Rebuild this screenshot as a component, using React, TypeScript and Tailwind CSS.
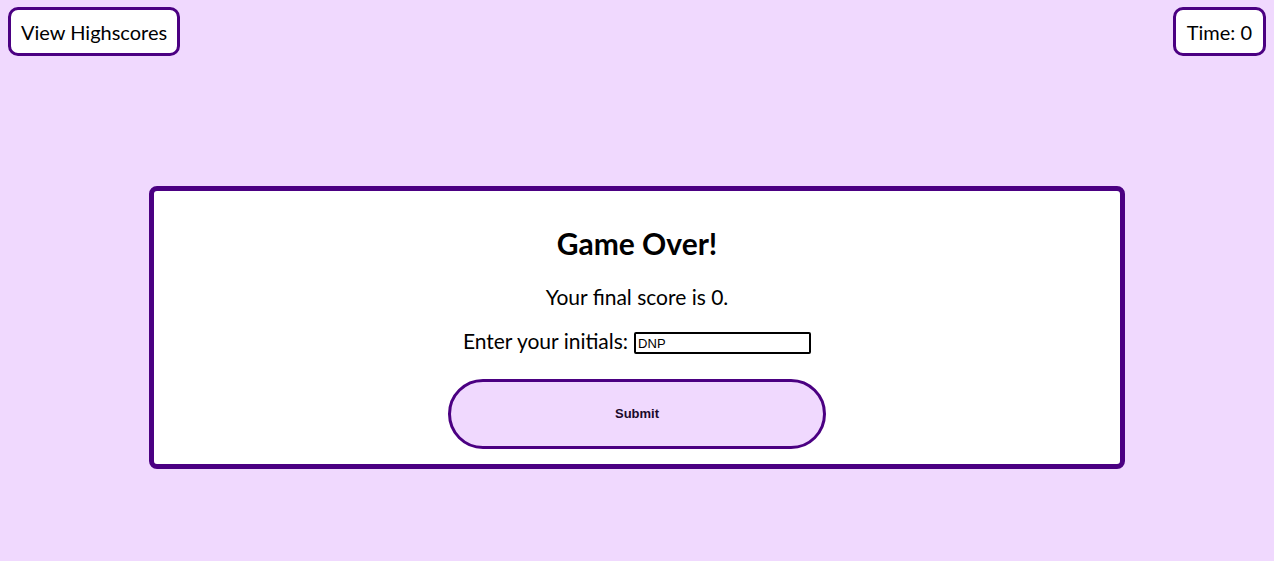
export default function App() {
  return (
    <div className="min-h-[561px] bg-[#f0d9fe] font-['Trebuchet_MS','Lato',sans-serif] text-black">
      <header className="flex items-start justify-between px-2 pt-[7px]">
        <button className="h-[49px] rounded-[10px] border-[3px] border-[#4b0082] bg-white px-[10px] text-[20px]">
          View Highscores
        </button>
        <div className="flex h-[49px] items-center rounded-[10px] border-[3px] border-[#4b0082] bg-white px-[11px] text-[20px]">
          Time: 0
        </div>
      </header>

      <main className="mx-auto mt-[130px] flex w-[976px] flex-col items-center rounded-[8px] border-[5px] border-[#4b0082] bg-white pb-[15px] pt-[34px]">
        <h1 className="text-[30px] font-bold leading-[36px]">Game Over!</h1>
        <p className="mt-[24px] text-[21px] leading-[24px]">Your final score is 0.</p>
        <div className="mt-[19px] flex items-center gap-[6px]">
          <label htmlFor="initials" className="text-[21px] leading-[24px]">
            Enter your initials:
          </label>
          <input
            id="initials"
            defaultValue="DNP"
            className="mt-[4px] h-[22px] w-[177px] rounded-[2px] border-2 border-black px-[2px] font-['Liberation_Sans',sans-serif] text-[13px] outline-none"
          />
        </div>
        <button className="mt-[25px] h-[70px] w-[378px] rounded-[35px] border-[3px] border-[#4b0082] bg-[#f0d9fe] font-['Liberation_Sans',sans-serif] text-[13px] font-bold text-[#1a0a2a]">
          Submit
        </button>
      </main>
    </div>
  );
}
